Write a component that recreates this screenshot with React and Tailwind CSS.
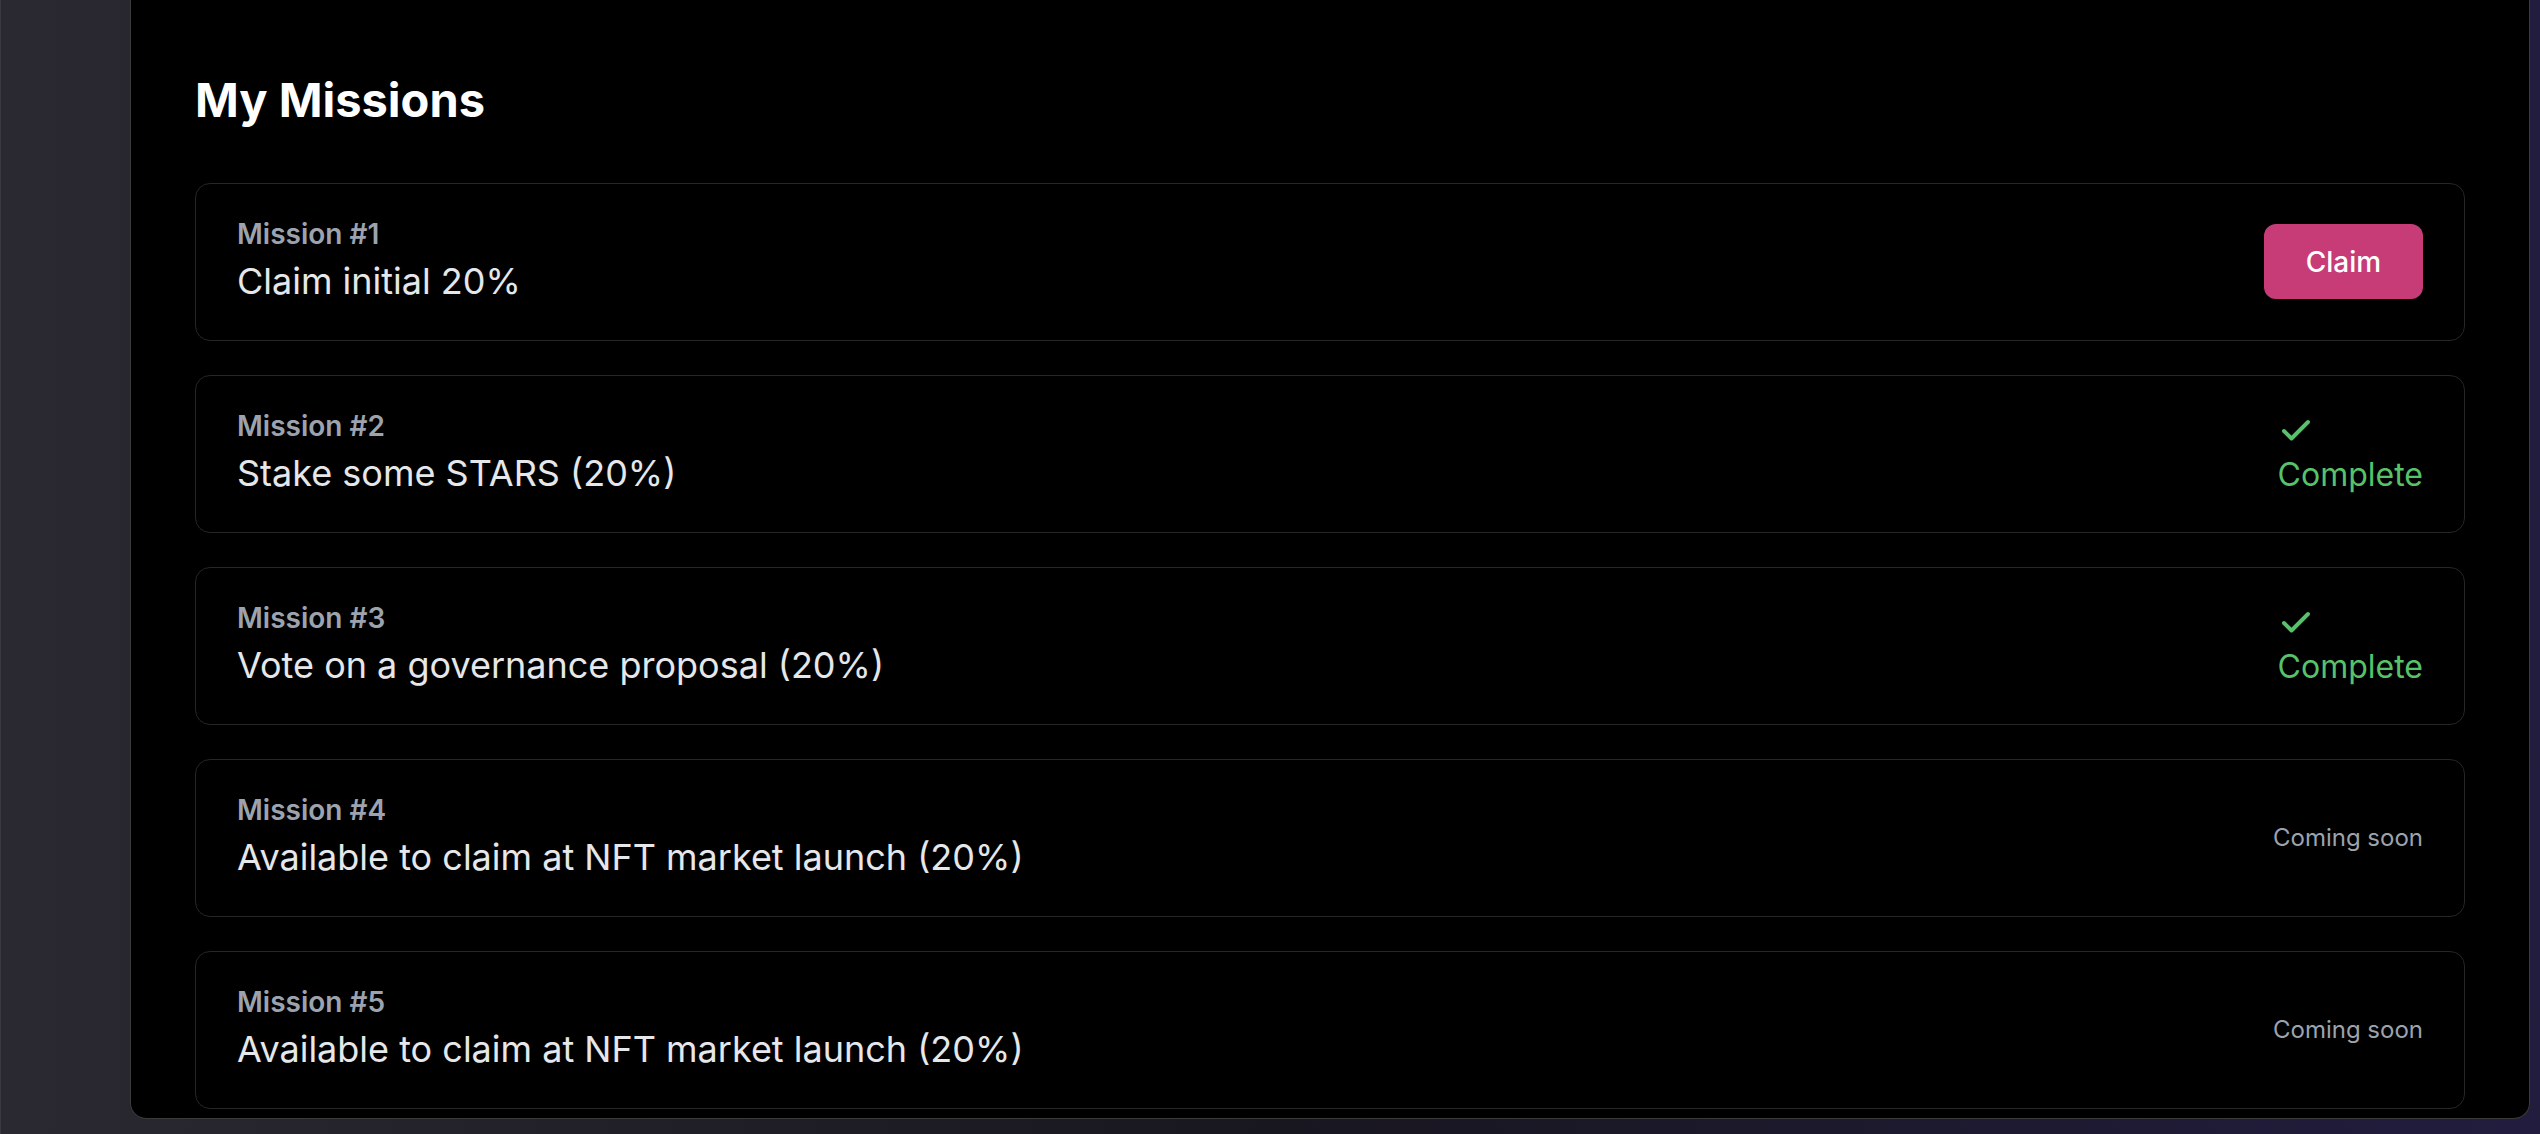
import React from 'react'
import { Check } from 'lucide-react'

const MISSIONS = [
  { id: 1, title: 'Claim initial 20%',                          status: 'claim' },
  { id: 2, title: 'Stake some STARS (20%)',                     status: 'complete' },
  { id: 3, title: 'Vote on a governance proposal (20%)',        status: 'complete' },
  { id: 4, title: 'Available to claim at NFT market launch (20%)', status: 'soon' },
  { id: 5, title: 'Available to claim at NFT market launch (20%)', status: 'soon' },
]

function MissionStatus({ status }) {
  if (status === 'claim') {
    return (
      <button className="mt-[5px] w-[159px] h-[75px] rounded-[12px] bg-[#c73c76] text-white text-[28px] font-medium leading-none">
        Claim
      </button>
    )
  }
  if (status === 'complete') {
    return (
      <div className="mt-[4px] flex flex-col items-start text-[#56c26a]">
        <Check size={36} strokeWidth={2.6} />
        <span className="mt-[7px] text-[32px] leading-[38px]">Complete</span>
      </div>
    )
  }
  return <span className="mt-[5px] text-[24px] leading-[36px] text-[#9ca3af]">Coming soon</span>
}

function MissionCard({ m }) {
  return (
    <div className="flex items-center justify-between border border-[#262626] rounded-[15px] px-[41px] pt-[29px] pb-[35px]">
      <div className="flex flex-col">
        <span className="text-[28px] leading-[42px] font-semibold text-[#9ca3af]">Mission #{m.id}</span>
        <span className="mt-[2px] text-[36px] leading-[48px] text-[#e5e7eb]">{m.title}</span>
      </div>
      <MissionStatus status={m.status} />
    </div>
  )
}

export default function App() {
  return (
    <div className="w-full h-[1134px] overflow-hidden flex items-start border-l border-[#3a3842] bg-linear-to-r from-[#2a2830] via-[#18161f] to-[#221c3e] font-['Inter',sans-serif]">
      <div className="w-[129px] shrink-0" />
      <div className="w-[2400px] shrink-0 bg-black border-x border-b border-[#3b3b3b] rounded-b-[16px] px-16 pt-[70px] pb-[9px]">
        <h1 className="text-[47px] leading-[60px] font-bold text-white">My Missions</h1>
        <div className="mt-[53px] flex flex-col gap-[34px]">
          {MISSIONS.map(m => <MissionCard key={m.id} m={m} />)}
        </div>
      </div>
    </div>
  )
}
